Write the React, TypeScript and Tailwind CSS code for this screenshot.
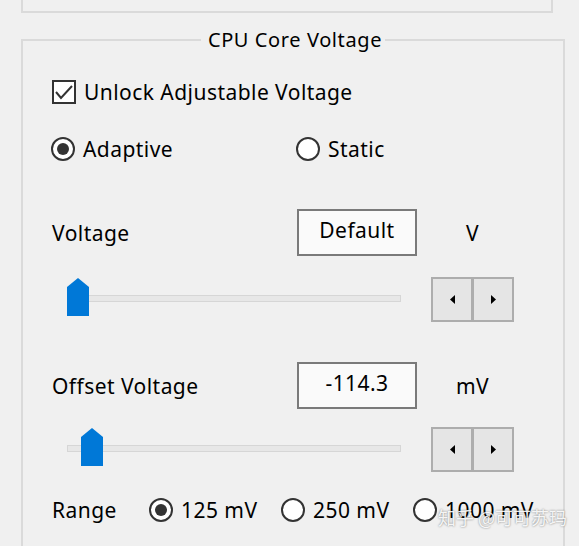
import React from 'react'

const Radio = ({ checked, label }: { checked?: boolean; label: string }) => (
  <div className="flex items-center gap-[8px]">
    <span className="flex h-6 w-6 shrink-0 items-center justify-center rounded-full border-2 border-[#333333] bg-white">
      {checked && <span className="h-3 w-3 rounded-full bg-[#333333]" />}
    </span>
    <span className="whitespace-nowrap">{label}</span>
  </div>
)

const Stepper = () => (
  <div className="flex h-[45px] w-[83px]">
    <button className="flex w-[42px] items-center justify-center border-2 border-[#adadad] bg-[#e5e5e5]">
      <svg width="5" height="9" viewBox="0 0 5 9">
        <polygon points="5,0 0,4.5 5,9" fill="#000" />
      </svg>
    </button>
    <button className="-ml-px flex w-[42px] items-center justify-center border-2 border-[#adadad] bg-[#e5e5e5]">
      <svg width="5" height="9" viewBox="0 0 5 9">
        <polygon points="0,0 5,4.5 0,9" fill="#000" />
      </svg>
    </button>
  </div>
)

const Slider = ({ pos }: { pos: number }) => (
  <div className="relative h-[45px] w-[334px]">
    <div className="mt-[18px] h-[7px] w-full border border-[#d6d6d6] bg-[#e7e7e7]" />
    <svg className="absolute top-px" style={{ left: pos }} width="22" height="38" viewBox="0 0 22 38">
      <polygon points="0,9 11,0 22,9 22,38 0,38" fill="#0078d7" />
    </svg>
  </div>
)

const ValueRow = ({ label, value, unit }: { label: string; value: string; unit: string }) => (
  <div className="flex items-center">
    <div className="w-[245px]">{label}</div>
    <div className="flex h-[47px] w-[120px] items-center justify-center border-2 border-[#7a7a7a] bg-[#fafafa] pb-[6px]">
      {value}
    </div>
    <div className="ml-[14px] w-[83px] text-center">{unit}</div>
  </div>
)

export default function App() {
  return (
    <div className="relative min-h-screen overflow-hidden bg-[#f0f0f0] font-['Noto_Sans',sans-serif] text-[21px] leading-7 tracking-[0.45px] text-black">
      <div className="ml-[21px] h-[13px] w-[532px] border-x-2 border-b-2 border-[#dadada]" />

      <fieldset className="ml-[21px] mt-[15px] w-[532px] border-2 border-[#dadada] pb-[80px] pl-[29px] pr-[29px] pt-[28px]">
        <legend className="mx-auto pl-[7px] pr-[3px] text-[20px] leading-6 tracking-[0.6px]">CPU Core Voltage</legend>

        <div className="flex h-6 items-center gap-[8px]">
          <span className="flex h-6 w-6 shrink-0 items-center justify-center border-2 border-[#333333] bg-white">
            <svg width="20" height="20" viewBox="0 0 20 20">
              <polyline points="2,10 7,16 18,4" fill="none" stroke="#333" strokeWidth="2" />
            </svg>
          </span>
          <span>Unlock Adjustable Voltage</span>
        </div>

        <div className="mt-[32px] flex h-[25px] items-center">
          <div className="-ml-px w-[245px]">
            <Radio checked label="Adaptive" />
          </div>
          <Radio label="Static" />
        </div>

        <div className="mt-[48px]">
          <ValueRow label="Voltage" value="Default" unit="V" />
        </div>

        <div className="mt-[21px] flex pl-[15px]">
          <Slider pos={0} />
          <div className="ml-[30px]">
            <Stepper />
          </div>
        </div>

        <div className="mt-[40px]">
          <ValueRow label="Offset Voltage" value="-114.3" unit="mV" />
        </div>

        <div className="mt-[18px] flex pl-[15px]">
          <Slider pos={14} />
          <div className="ml-[30px]">
            <Stepper />
          </div>
        </div>

        <div className="mt-[26px] flex h-6 items-center">
          <div className="w-[97px]">Range</div>
          <div className="w-[132px]">
            <Radio checked label="125 mV" />
          </div>
          <div className="w-[132px]">
            <Radio label="250 mV" />
          </div>
          <Radio label="1000 mV" />
        </div>
      </fieldset>

      <div className="absolute left-[438px] top-[503px] whitespace-nowrap font-['Noto_Sans_CJK_SC',sans-serif] text-[18px] leading-7 tracking-normal text-white/90 [text-shadow:0_0_2px_rgba(0,0,0,0.55)]">
        知乎 @可可苏玛
      </div>
    </div>
  )
}
